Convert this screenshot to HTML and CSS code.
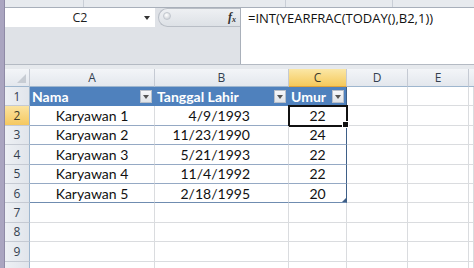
FILE: index.html
```html
<!DOCTYPE html>
<html>
<head>
<meta charset="utf-8">
<link rel="stylesheet" href="styles.css">
</head>
<body>
<div class="app">
  <div class="edge"></div>
  <div class="main">
    <div class="topstrip">
      <span class="tick t1"></span><span class="tick t2"></span><span class="tick t3"></span>
    </div>
    <div class="fbar">
      <div class="fleft">
        <div class="fline">
          <div class="namebox"><span class="nb-text">C2</span><span class="nb-arrow"></span></div>
          <div class="pill"><span class="knob"></span><span class="fx">f<sub>x</sub></span></div>
        </div>
      </div>
      <div class="formula">=INT(YEARFRAC(TODAY(),B2,1))</div>
    </div>
    <div class="band"></div>
    <div class="sheet">
      <div class="ch corner"><span class="tri"></span></div>
      <div class="ch">A</div>
      <div class="ch">B</div>
      <div class="ch sel">C</div>
      <div class="ch">D</div>
      <div class="ch">E</div>
      <div class="ch last"></div>

      <div class="rh">1</div>
      <div class="c th">Nama<span class="dd"></span></div>
      <div class="c th">Tanggal Lahir<span class="dd"></span></div>
      <div class="c th tr">Umur<span class="dd"></span></div>
      <div class="c"></div><div class="c"></div><div class="c"></div>

      <div class="rh rsel">2</div>
      <div class="c tb ca">Karyawan 1</div>
      <div class="c tb cb">4/9/1993</div>
      <div class="c tb cc tr active">22</div>
      <div class="c"></div><div class="c"></div><div class="c"></div>

      <div class="rh">3</div>
      <div class="c tb ca">Karyawan 2</div>
      <div class="c tb cb">11/23/1990</div>
      <div class="c tb cc tr">24</div>
      <div class="c"></div><div class="c"></div><div class="c"></div>

      <div class="rh">4</div>
      <div class="c tb ca">Karyawan 3</div>
      <div class="c tb cb">5/21/1993</div>
      <div class="c tb cc tr">22</div>
      <div class="c"></div><div class="c"></div><div class="c"></div>

      <div class="rh">5</div>
      <div class="c tb ca">Karyawan 4</div>
      <div class="c tb cb">11/4/1992</div>
      <div class="c tb cc tr">22</div>
      <div class="c"></div><div class="c"></div><div class="c"></div>

      <div class="rh">6</div>
      <div class="c tb ca lastrow">Karyawan 5</div>
      <div class="c tb cb lastrow">2/18/1995</div>
      <div class="c tb cc tr lastrow corner-h">20</div>
      <div class="c"></div><div class="c"></div><div class="c"></div>

      <div class="rh">7</div>
      <div class="c"></div><div class="c"></div><div class="c"></div><div class="c"></div><div class="c"></div><div class="c"></div>
      <div class="rh">8</div>
      <div class="c"></div><div class="c"></div><div class="c"></div><div class="c"></div><div class="c"></div><div class="c"></div>
      <div class="rh">9</div>
      <div class="c"></div><div class="c"></div><div class="c"></div><div class="c"></div><div class="c"></div><div class="c"></div>
      <div class="rh"></div>
      <div class="c"></div><div class="c"></div><div class="c"></div><div class="c"></div><div class="c"></div><div class="c"></div>
    </div>
  </div>
</div>
</body>
</html>
```

FILE: styles.css
```css
* { box-sizing: border-box; }
html, body { margin: 0; padding: 0; }
body { width: 474px; height: 268px; overflow: hidden; background: #fff; }

.app {
  display: flex;
  width: 474px;
  height: 268px;
  overflow: hidden;
  font-family: "Lato", "Liberation Sans", sans-serif;
}
.edge {
  width: 5px;
  flex: none;
  background: #aaa5c0;
  border-right: 1px solid #8f8aa6;
}
.main {
  flex: 1;
  display: flex;
  flex-direction: column;
  background: #e4e7ec;
}
.topstrip {
  height: 8px;
  flex: none;
  position: relative;
  background: #e7eaee;
  border-bottom: 1px solid #a8afba;
}
.tick { position: absolute; top: 0; width: 1px; height: 7px; background: #c9ced6; }
.t1 { left: 78px; }
.t2 { left: 280px; }
.t3 { left: 387px; }

.fbar {
  height: 57px;
  flex: none;
  display: flex;
  border-bottom: 1px solid #b4bac3;
}
.fleft {
  width: 235px;
  flex: none;
  background: #dfe2e7;
}
.fline {
  display: flex;
  height: 19px;
}
.namebox {
  width: 150px;
  background: #fff;
  display: flex;
  align-items: center;
  justify-content: center;
  position: relative;
  font-family: "Open Sans", "Liberation Sans", sans-serif;
  font-size: 12.5px;
  color: #1e1e1e;
}
.nb-arrow {
  position: absolute;
  right: 5px;
  top: 8px;
  width: 0; height: 0;
  border-left: 3px solid transparent;
  border-right: 3px solid transparent;
  border-top: 4px solid #333;
}
.pill {
  flex: 1;
  margin-left: 3px;
  display: flex;
  align-items: center;
  justify-content: space-between;
  border-radius: 10px 0 0 10px;
  border: 1px solid #b9bec6;
  border-right: none;
  background: linear-gradient(#eef0f3, #dde1e6);
  padding: 0 4px 0 4px;
}
.knob {
  width: 8px; height: 8px;
  border-radius: 50%;
  background: radial-gradient(circle at 40% 35%, #ffffff, #c3c8cf);
  border: 1px solid #c2c7ce;
  margin-top: -4px;
}
.fx {
  font-family: "Liberation Serif", serif;
  font-style: italic;
  font-weight: bold;
  font-size: 12px;
  color: #333;
}
.fx sub { font-size: 8px; vertical-align: -1px; }
.formula {
  flex: 1;
  background: #fff;
  border-left: 1px solid #a9b0ba;
  padding: 1px 0 0 7px;
  font-family: "Open Sans", "Liberation Sans", sans-serif;
  font-size: 13px;
  color: #111;
}
.band {
  height: 4px;
  flex: none;
  background: #e6e9ed;
}

.sheet {
  flex: 1;
  display: grid;
  grid-template-columns: 25px 125px 134px 58px 61px 61px 1fr;
  grid-template-rows: 18px;
  grid-auto-rows: 19.4px;
  background: #fff;
  font-family: "Lato", "Liberation Sans", sans-serif;
  font-size: 14px;
  color: #111;
}
.ch {
  background: linear-gradient(#f3f5f8, #e3e7ed);
  border-right: 1px solid #c5cad3;
  border-bottom: 1px solid #9eb6ce;
  display: flex;
  align-items: center;
  justify-content: center;
  font-family: "Open Sans", "Liberation Sans", sans-serif;
  font-size: 12px;
  color: #333f4f;
}
.ch.corner { position: relative; }
.tri {
  position: absolute;
  right: 3px;
  bottom: 3px;
  width: 0; height: 0;
  border-left: 9px solid transparent;
  border-bottom: 9px solid #c7ccd3;
}
.ch.sel {
  background: linear-gradient(#fbe7a6, #f5c95b);
  border-bottom-color: #e0a33c;
  color: #3a3a2a;
}
.ch.last { border-right: none; }
.rh {
  background: linear-gradient(90deg, #edf0f4, #e1e5eb);
  border-right: 1px solid #9eb6ce;
  border-bottom: 1px solid #c5cad3;
  display: flex;
  align-items: center;
  justify-content: center;
  font-family: "Open Sans", "Liberation Sans", sans-serif;
  font-size: 12px;
  color: #333f4f;
}
.rh.rsel {
  background: linear-gradient(#fbe3a0, #f5c860);
  color: #3a3a2a;
}
.c {
  border-right: 1px solid #dadcdf;
  border-bottom: 1px solid #dadcdf;
  display: flex;
  align-items: center;
  white-space: nowrap;
  position: relative;
}
.th {
  background: #4f81bd;
  color: #fff;
  font-weight: bold;
  font-size: 14px;
  padding-left: 2px;
  border-bottom: 1px solid #4f81bd;
  border-right-color: #4f81bd;
}
.dd {
  position: absolute;
  right: 2px;
  top: 3px;
  width: 12px;
  height: 13px;
  background: linear-gradient(#f7f8fa, #dfe3e8);
  border: 1px solid #b8bfc9;
}
.dd::after {
  content: "";
  position: absolute;
  left: 2px;
  top: 4px;
  border-left: 3px solid transparent;
  border-right: 3px solid transparent;
  border-top: 4px solid #555;
}
.tb { border-bottom: 1px solid #95a9c4; }
.tr { border-right: 1px solid #3e5f87; }
.ca { justify-content: center; }
.cb { justify-content: flex-end; padding-right: 38px; }
.cc { justify-content: center; }
.lastrow { border-bottom: 1px solid #6f8cb0; }
.active {
  outline: 2px solid #111;
  outline-offset: -1px;
}
.active::after {
  content: "";
  position: absolute;
  right: -3px;
  bottom: -3px;
  width: 5px;
  height: 5px;
  background: #111;
  border: 1px solid #fff;
  z-index: 2;
}
.corner-h::after {
  content: "";
  position: absolute;
  right: 0;
  bottom: 0;
  width: 0; height: 0;
  border-left: 4px solid transparent;
  border-bottom: 4px solid #3e5f87;
}
```
